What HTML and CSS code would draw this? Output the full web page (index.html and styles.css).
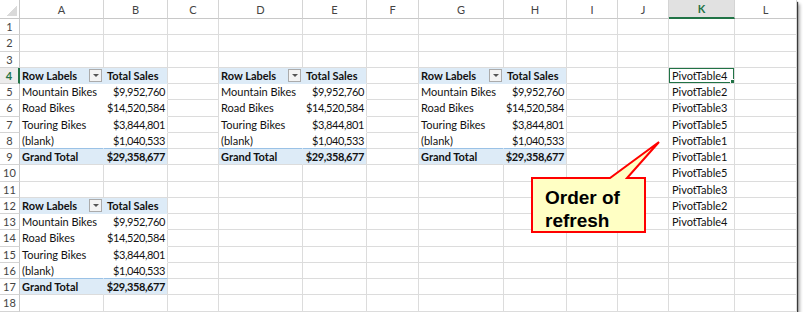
FILE: index.html
```html
<!DOCTYPE html>
<html lang="en">
<head>
    <meta charset="UTF-8">
    <title>Pivot refresh order</title>
    <link rel="stylesheet" href="styles.css">
</head>
<body>
    <div class="sheet">
        <table class="grid">
            <colgroup>
                <col style="width:20px"><col style="width:84px"><col style="width:64px"><col style="width:51px">
                <col style="width:84px"><col style="width:64px"><col style="width:52px"><col style="width:85px">
                <col style="width:63px"><col style="width:51px"><col style="width:51px"><col style="width:66px">
                <col style="width:62px">
            </colgroup>
            <tr class="col-heads">
                <th class="corner"></th><th>A</th><th>B</th><th>C</th><th>D</th><th>E</th><th>F</th>
                <th>G</th><th>H</th><th>I</th><th>J</th><th class="col-sel">K</th><th>L</th>
            </tr>
            <tr><th>1</th><td></td><td></td><td></td><td></td><td></td><td></td><td></td><td></td><td></td><td></td><td></td><td></td></tr>
            <tr><th>2</th><td></td><td></td><td></td><td></td><td></td><td></td><td></td><td></td><td></td><td></td><td></td><td></td></tr>
            <tr><th>3</th><td></td><td></td><td></td><td></td><td></td><td></td><td></td><td></td><td></td><td></td><td></td><td></td></tr>
            <tr>
                <th class="row-sel">4</th>
                <td class="pv-h lab"><span class="filter"></span>Row Labels</td>
                <td class="pv-h">Total Sales</td>
                <td></td>
                <td class="pv-h lab"><span class="filter"></span>Row Labels</td>
                <td class="pv-h">Total Sales</td>
                <td></td>
                <td class="pv-h lab"><span class="filter"></span>Row Labels</td>
                <td class="pv-h">Total Sales</td>
                <td></td><td></td>
                <td class="cell-sel">PivotTable4</td>
                <td></td>
            </tr>
            <tr>
                <th>5</th>
                <td class="pv-r lab">Mountain Bikes</td><td class="pv-r num">$9,952,760</td><td></td>
                <td class="pv-r lab">Mountain Bikes</td><td class="pv-r num">$9,952,760</td><td></td>
                <td class="pv-r lab">Mountain Bikes</td><td class="pv-r num">$9,952,760</td>
                <td></td><td></td><td>PivotTable2</td><td></td>
            </tr>
            <tr>
                <th>6</th>
                <td class="pv-r lab">Road Bikes</td><td class="pv-r num">$14,520,584</td><td></td>
                <td class="pv-r lab">Road Bikes</td><td class="pv-r num">$14,520,584</td><td></td>
                <td class="pv-r lab">Road Bikes</td><td class="pv-r num">$14,520,584</td>
                <td></td><td></td><td>PivotTable3</td><td></td>
            </tr>
            <tr>
                <th>7</th>
                <td class="pv-r lab">Touring Bikes</td><td class="pv-r num">$3,844,801</td><td></td>
                <td class="pv-r lab">Touring Bikes</td><td class="pv-r num">$3,844,801</td><td></td>
                <td class="pv-r lab">Touring Bikes</td><td class="pv-r num">$3,844,801</td>
                <td></td><td></td><td>PivotTable5</td><td></td>
            </tr>
            <tr>
                <th>8</th>
                <td class="pv-r end lab">(blank)</td><td class="pv-r end num">$1,040,533</td><td></td>
                <td class="pv-r end lab">(blank)</td><td class="pv-r end num">$1,040,533</td><td></td>
                <td class="pv-r end lab">(blank)</td><td class="pv-r end num">$1,040,533</td>
                <td></td><td></td><td>PivotTable1</td><td></td>
            </tr>
            <tr>
                <th>9</th>
                <td class="pv-t lab">Grand Total</td><td class="pv-t num">$29,358,677</td><td></td>
                <td class="pv-t lab">Grand Total</td><td class="pv-t num">$29,358,677</td><td></td>
                <td class="pv-t lab">Grand Total</td><td class="pv-t num">$29,358,677</td>
                <td></td><td></td><td>PivotTable1</td><td></td>
            </tr>
            <tr><th>10</th><td></td><td></td><td></td><td></td><td></td><td></td><td></td><td></td><td></td><td></td><td>PivotTable5</td><td></td></tr>
            <tr><th>11</th><td></td><td></td><td></td><td></td><td></td><td></td><td></td><td></td><td></td><td></td><td>PivotTable3</td><td></td></tr>
            <tr>
                <th>12</th>
                <td class="pv-h lab"><span class="filter"></span>Row Labels</td>
                <td class="pv-h">Total Sales</td>
                <td></td><td></td><td></td><td></td><td></td><td></td><td></td><td></td>
                <td>PivotTable2</td><td></td>
            </tr>
            <tr>
                <th>13</th>
                <td class="pv-r lab">Mountain Bikes</td><td class="pv-r num">$9,952,760</td>
                <td></td><td></td><td></td><td></td><td></td><td></td><td></td><td></td>
                <td>PivotTable4</td><td></td>
            </tr>
            <tr>
                <th>14</th>
                <td class="pv-r lab">Road Bikes</td><td class="pv-r num">$14,520,584</td>
                <td></td><td></td><td></td><td></td><td></td><td></td><td></td><td></td><td></td><td></td>
            </tr>
            <tr>
                <th>15</th>
                <td class="pv-r lab">Touring Bikes</td><td class="pv-r num">$3,844,801</td>
                <td></td><td></td><td></td><td></td><td></td><td></td><td></td><td></td><td></td><td></td>
            </tr>
            <tr>
                <th>16</th>
                <td class="pv-r end lab">(blank)</td><td class="pv-r end num">$1,040,533</td>
                <td></td><td></td><td></td><td></td><td></td><td></td><td></td><td></td><td></td><td></td>
            </tr>
            <tr>
                <th>17</th>
                <td class="pv-t lab">Grand Total</td><td class="pv-t num">$29,358,677</td>
                <td></td><td></td><td></td><td></td><td></td><td></td><td></td><td></td><td></td><td></td>
            </tr>
            <tr><th>18</th><td></td><td></td><td></td><td></td><td></td><td></td><td></td><td></td><td></td><td></td><td></td><td></td></tr>
        </table>

        <!-- callout over the grid -->
        <svg class="callout" width="797" height="311" viewBox="0 0 797 311">
            <path d="M532 178 L610 178 L659 142 L627 178 L645 178 L645 232 L532 232 Z"
                  fill="#ffffc4" stroke="#ff0000" stroke-width="2" stroke-linejoin="miter"/>
            <text x="545" y="204">Order of</text>
            <text x="545" y="227">refresh</text>
        </svg>
    </div>
</body>
</html>
```

FILE: styles.css
```css
body {
    margin: 0;
    padding: 0;
    background: #fff;
    font-family: "Lato", "Liberation Sans", sans-serif;
}

.sheet {
    position: relative;
    width: 797px;
    background: #fff;
    box-shadow: 1px 2px 1px #3a3a3a, 3px 4px 3px rgba(0, 0, 0, 0.3);
}

.grid {
    border-collapse: separate;
    border-spacing: 0;
    table-layout: fixed;
    width: 797px;
    font-size: 11px;
    color: #111;
}

.grid td,
.grid th {
    height: 15.25px;
    padding: 0 3px;
    line-height: 15px;
    border-right: 1px solid #dcdcdc;
    border-bottom: 1px solid #dcdcdc;
    white-space: nowrap;
    overflow: hidden;
    box-sizing: content-box;
}

.grid th {
    padding: 0;
    font-weight: normal;
    font-size: 11px;
    color: #444;
    text-align: center;
    background: #fff;
    border-color: #d4d4d4;
}

.col-heads th {
    height: 17px;
    line-height: 17px;
    border-bottom-color: #c8c8c8;
}

.grid tr > th:first-child {
    border-right-color: #c8c8c8;
}

.corner {
    background: #fff linear-gradient(to bottom right, transparent 50%, #dadada 50%) no-repeat right 2px bottom 2px / 10px 10px !important;
}

.col-heads .col-sel {
    background: #e1e1e1;
    color: #217346;
    font-weight: bold;
    border-bottom: 2px solid #217346;
    height: 16px;
}

.grid .row-sel {
    color: #217346;
    font-weight: bold;
    background: #ececec;
    border-right: 2px solid #217346 !important;
}

/* pivot tables */
.pv-h {
    background: #ddebf7;
    font-weight: bold;
    border-bottom-color: #ddebf7 !important;
}

.pv-r {
    background: #fff;
    border-bottom-color: #fff !important;
}

.pv-r.end {
    border-bottom-color: #9bc2e6 !important;
}

.pv-t {
    background: #ddebf7;
    font-weight: bold;
}

.pv-h.lab { border-right-color: #ddebf7; }
.pv-r.lab { border-right-color: #fff; }
.pv-t.lab { border-right-color: #ddebf7; }

.grid .lab {
    padding-left: 2px;
}

.grid .num {
    text-align: right;
    padding-left: 0;
    padding-right: 2px;
    letter-spacing: -0.4px;
}

.filter {
    float: right;
    position: relative;
    width: 11px;
    height: 11px;
    margin: 1px -2px 0 0;
    border: 1px solid #ababab;
    background: #f3f3f3;
}

.filter::after {
    content: "";
    position: absolute;
    left: 3px;
    top: 4px;
    border-left: 3px solid transparent;
    border-right: 3px solid transparent;
    border-top: 3px solid #555;
}

.cell-sel {
    position: relative;
}

.cell-sel::after {
    content: "";
    position: absolute;
    left: -1px;
    top: -1px;
    right: -1px;
    bottom: -1px;
    border: 2px solid #217346;
}

.cell-sel::before {
    content: "";
    position: absolute;
    right: -3px;
    bottom: -3px;
    width: 5px;
    height: 5px;
    background: #217346;
    border: 1px solid #fff;
    z-index: 1;
}

.callout {
    position: absolute;
    left: 0;
    top: 0;
    overflow: visible;
    pointer-events: none;
}

.callout text {
    font-family: "Liberation Sans", Arial, sans-serif;
    font-weight: bold;
    font-size: 19px;
    fill: #000;
}
```
